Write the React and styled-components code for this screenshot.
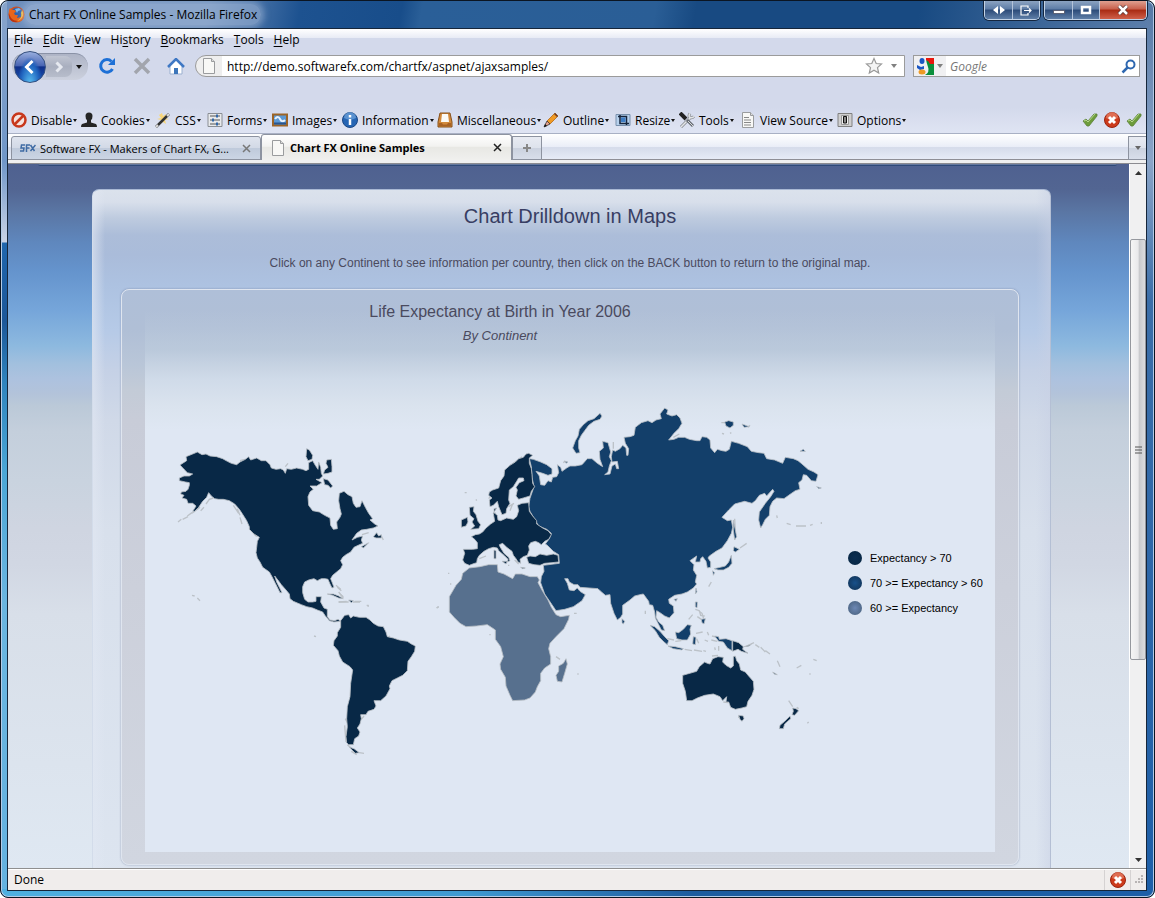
import React from 'react';
import styled, { createGlobalStyle } from 'styled-components';

const GlobalStyle = createGlobalStyle`
  * {
    box-sizing: border-box;
  }
  body {
    margin: 0;
    background: #fff;
    font-family: "Open Sans", "Noto Sans", sans-serif;
    font-size: 12px;
    color: #000;
  }
  button, input {
    font: inherit;
    color: inherit;
  }
  button {
    display: inline-flex;
    align-items: center;
    justify-content: center;
    padding: 0;
    border: none;
    background: none;
    white-space: nowrap;
  }
  svg {
    display: block;
    flex: none;
  }
`;

const Window = styled.div`
  display: flex;
  flex-direction: column;
  height: 100vh;
  padding: 0 7px 6px 6px;
  border: 1px solid #0b1522;
  border-radius: 8px;
  box-shadow: inset 0 0 0 1px #b4cbe6;
  overflow: hidden;
  background:
    linear-gradient(90deg, #4fb0e0 0, #3f9ad2 40%, #1e5c9f 60%, #1e5fa8 100%) bottom / 100% 8px no-repeat,
    linear-gradient(#88a4cb 0, #6f96c8 160px, #c9d3e6 241px, #1f66ad 242px, #1c5799 320px, #2f83bd 380px, #4aa6d6 470px, #6ab5e0 600px, #64b2e0 100%) left / 8px 100% no-repeat,
    linear-gradient(#5578a5 0, #8ba5c8 160px, #3b6ea8 300px, #1e5fa8 100%) right / 8px 100% no-repeat,
    #1c5796;
`;

const TitleBar = styled.header`
  display: flex;
  align-items: center;
  flex: none;
  height: 27px;
  padding: 0 0 0 1px;
  background: linear-gradient(100deg, #6e8fbd 0, #6c8ebb 200px, #1d5290 290px, #184d8a 390px, #2a5f98 410px, #2a5e96 640px, #184a82 680px, #184a82 900px, #5b7eab 100%);
`;

const WindowTitle = styled.h1`
  flex: 1;
  margin: 0;
  font-size: 12px;
  font-weight: 400;
  line-height: 18px;

  span {
    padding: 2px 4px;
    border-radius: 10px;
    background: rgba(170, 190, 220, 0.5);
    box-shadow: 0 0 6px 3px rgba(170, 190, 220, 0.5);
  }
`;

const WindowButtons = styled.div`
  display: flex;
  align-self: flex-start;
  height: 19px;
  margin-left: 4px;
  border: 1px solid #c3d3e6;
  border-top: none;
  border-radius: 0 0 5px 5px;
  box-shadow: 0 0 0 1px #14263f;
  overflow: hidden;
`;

const WindowButton = styled.button`
  width: ${p => (p.$close ? 47 : 27)}px;
  height: 18px;
  background: ${p => (p.$close
    ? 'linear-gradient(#dfa090, #c8604c 45%, #a82a12 50%, #d0604a)'
    : 'linear-gradient(#8ba3c2, #5d7ca6 45%, #2b4a78 50%, #5f7fa8)')};

  & + & {
    border-left: 1px solid #b4c4da;
  }
`;

const Browser = styled.div`
  display: flex;
  flex: 1;
  flex-direction: column;
  min-height: 0;
  border: 1px solid #16263a;
  background: #d3d9eb;
`;

const MenuBar = styled.nav`
  display: flex;
  align-items: center;
  gap: 10px;
  flex: none;
  height: 21px;
  padding-left: 6px;
  background: linear-gradient(#fff, #e8ebf5 9px, #d3d9eb 9px);

  u {
    text-underline-offset: 2px;
  }
`;

const NavBar = styled.div`
  display: flex;
  align-items: center;
  flex: none;
  height: 32px;
  padding: 0 6px 0 4px;
`;

const BackForward = styled.div`
  display: flex;
  align-items: center;
  width: 76px;
  height: 27px;
  border-radius: 14px;
  border-top: 1px solid #8a92a6;
  background: linear-gradient(#aeb4c6, #ccd1de);
`;

const BackButton = styled.button`
  width: 32px;
  height: 32px;
  margin-left: 2px;
  border: 1px solid #35507f;
  border-radius: 50%;
  background: radial-gradient(ellipse at 50% 110%, #5cc4f4 0, #1f62bd 45%, transparent 60%),
    linear-gradient(#98aede 0, #4a66b4 45%, #10308a 50%, #1a56b4 100%);
`;

const ForwardButton = styled.button`
  width: 26px;
  height: 21px;
  border-radius: 0 7px 7px 0;
  background: linear-gradient(#c0c5d2, #a9afbf 50%, #b7bdcb);
`;

const IconButton = styled.button`
  width: ${p => p.$w || 20}px;
  height: 20px;
`;

const UrlBar = styled.div`
  display: flex;
  align-items: center;
  flex: 1;
  height: 22px;
  margin-left: 1px;
  padding: 0 0 0 5px;
  border: 1px solid #9b9b9b;
  border-radius: 11px 0 0 11px;
  background: linear-gradient(90deg, #eee 26px, #fff 26px);
`;

const UrlInput = styled.input`
  flex: 1;
  min-width: 0;
  margin-left: 10px;
  padding: 0;
  border: none;
  outline: none;
  background: none;
`;

const SearchBar = styled(UrlBar)`
  flex: 0 0 227px;
  margin-left: 8px;
  padding: 0 3px;
  border-radius: 0;
  background: linear-gradient(90deg, #f0f0f2 32px, #fff 32px);
`;

const SearchInput = styled(UrlInput)`
  margin-left: 4px;
  font-style: italic;

  &::placeholder {
    color: #777;
    opacity: 1;
  }
`;

const DevBar = styled.div`
  display: flex;
  align-items: center;
  flex: none;
  height: 27px;
  margin-top: 25px;
  padding: 0 4px 0 3px;
  border-bottom: 1px solid #a8b0c4;
  background: linear-gradient(#d3d9eb, #dfe4f3);
`;

const DevItem = styled.button`
  flex: 0 0 ${p => p.$w}px;
  justify-content: flex-start;
  gap: 4px;
`;

const Caret = styled.i`
  width: 0;
  margin-left: ${p => (p.$wide ? 0 : -3)}px;
  border: ${p => (p.$wide ? 3 : 2)}px solid transparent;
  border-top: ${p => (p.$wide ? 4 : 3)}px solid ${p => p.$color || '#111'};
  border-bottom: 0;
`;

const DevStatus = styled.div`
  display: flex;
  gap: 6px;
  margin-left: auto;
`;

const TabStrip = styled.div`
  display: flex;
  align-items: flex-end;
  flex: none;
  height: 29px;
  padding-left: 3px;
  border-bottom: 3px solid #f0f0f0;
  background: linear-gradient(#fff, #e9edf7 50%, #d5dbea 52%, #e6ebf6 95%, #8f8f96 96%);
`;

const Tab = styled.div`
  display: flex;
  align-items: center;
  gap: 4px;
  flex: 0 1 ${p => (p.$active ? 251 : 250)}px;
  min-width: 0;
  height: ${p => (p.$active ? 26 : 24)}px;
  padding: 0 9px 0 8px;
  border: 1px solid #8d93a0;
  border-bottom-width: ${p => (p.$active ? 0 : 1)}px;
  border-radius: 3px 3px 0 0;
  background: ${p => (p.$active
    ? 'linear-gradient(#fff, #f2f2f0 45%, #e8e8e4 50%, #f0f0ee)'
    : 'linear-gradient(#dfe4ee, #d2d9e6 50%, #bfcadb 52%, #cbd5e4)')};
  font-weight: ${p => (p.$active ? 700 : 400)};
  font-size: 11px;
`;

const TabLabel = styled.a`
  flex: 1;
  overflow: hidden;
  color: inherit;
  text-decoration: none;
  text-overflow: ellipsis;
  white-space: nowrap;
`;

const TabButton = styled.button`
  width: ${p => p.$w}px;
  height: 24px;
  margin-left: ${p => (p.$end ? 'auto' : 0)};
  border: 1px solid #8d93a0;
  border-right-width: ${p => (p.$end ? 0 : 1)}px;
  background: linear-gradient(#e8ebf2, #dde2ec 50%, #cbd2df 52%, #d8deea);
`;

const Viewport = styled.div`
  display: flex;
  flex: 1;
  min-height: 0;
  border-top: 1px solid #8b8b90;
`;

const Page = styled.main`
  flex: 1;
  min-width: 0;
  padding: 0 78px 0 84px;
  overflow: hidden;
  background: linear-gradient(#4f6190 0, #526592 25px, #5a76a4 48px, #5f87bd 78px, #6594cd 108px, #76a6da 147px, #8db9df 182px, #a2c0de 200px, #adc2df 215px, #b3c3da 230px, #bbc9d8 242px, #c4cfdc 267px, #c9d3df 317px, #cfd5e1 365px, #d1d7e3 400px, #d8dfe9 450px, #dce4ee 600px, #dfe8f2 100%);
  font-family: "Liberation Sans", Arial, sans-serif;
  text-align: center;
  color: #4a4a5e;
`;

const BannerEdge = styled.div`
  height: 2px;
  margin: 0 -66px 23px -54px;
  border-bottom: 1px solid #2f4a78;
  border-radius: 0 0 6px 6px;
  background: #66799f;
`;

const Card = styled.section`
  min-height: 720px;
  padding: 14px 31px 0 28px;
  border: 1px solid #a9b8d4;
  border-left-color: #d3dcea;
  border-right-color: #b4bfd4;
  border-radius: 7px;
  background:
    linear-gradient(90deg, rgba(226, 232, 243, 0.6), transparent 12px, transparent calc(100% - 14px), rgba(200, 208, 228, 0.5)),
    linear-gradient(#dbe2ec 0, #d8dfeb 12px, #becbdf 28px, #acbdd9 45px, #aabcda 65px, #adc2e1 95px, #b6cae7 140px, #c5d1e6 180px, #d0d9e8 230px, #d8e0ec 340px, #dde5f0 100%);
`;

const PageTitle = styled.h2`
  margin: 0 0 26px;
  font-size: 20px;
  font-weight: 400;
  line-height: 24px;
  color: #383e63;
`;

const Intro = styled.p`
  margin: 0 0 17px;
  font-size: 12px;
  line-height: 18px;
`;

const Panel = styled.div`
  padding: 0 23px 12px;
  border: 1px solid #dfe5ef;
  border-radius: 8px;
  box-shadow: 0 0 2px rgba(90, 105, 140, 0.6);
  background: linear-gradient(#afbfd8 0, #b0bfd6 40px, #b9c6d8 75px, #c3cbd7 100px, #c8ccd8 130px, #ccd0db 300px, #d1d6e0 100%);
`;

const Chart = styled.figure`
  margin: 0;
  padding: 10px 0 34px;
  background: linear-gradient(transparent 0, transparent 20px, rgba(190, 205, 222, 0.6) 60px, #d0dbe9 90px, #dae3ee 115px, #dfe7f3 140px);
`;

const ChartCaption = styled.figcaption`
  padding-right: 140px;
  font-size: 16px;
  line-height: 24px;

  em {
    display: block;
    font-size: 13px;
  }
`;

const ChartBody = styled.div`
  display: flex;
  align-items: center;
`;

const WorldMap = styled.svg`
  flex: 1;
  min-width: 0;
`;

const Legend = styled.ul`
  flex: 0 0 150px;
  margin: 0;
  padding: 0 0 0 3px;
  list-style: none;
  font-size: 11px;
  line-height: 25px;
  text-align: left;
  color: #000;
`;

const LegendItem = styled.li`
  display: flex;
  align-items: center;
  gap: 8px;
  white-space: nowrap;

  &::before {
    content: '';
    width: 14px;
    height: 14px;
    border-radius: 50%;
    background: radial-gradient(${p => p.$light}, ${p => p.$color} 75%);
  }
`;

const ScrollBar = styled.div`
  display: flex;
  flex-direction: column;
  align-items: center;
  flex: 0 0 17px;
  border-left: 1px solid #fff;
  background: #f0f0f1;

  button {
    width: 16px;
    height: 17px;
  }
`;

const Track = styled.div`
  display: flex;
  flex: 1;
  flex-direction: column;
  width: 100%;
  padding-top: 58px;
`;

const Thumb = styled.div`
  display: flex;
  flex: 0 1 421px;
  align-items: center;
  justify-content: center;
  border: 1px solid #95989e;
  border-radius: 2px;
  background: linear-gradient(90deg, #f5f5f5, #e9e9eb 50%, #c9cacd 60%, #dcdcde);
`;

const StatusBar = styled.footer`
  display: flex;
  align-items: center;
  flex: none;
  height: 22px;
  padding-left: 6px;
  border-top: 1px solid #8f8f8f;
  background: #f0edec;
  box-shadow: inset 0 1px #fff;
`;

const StatusCell = styled.div`
  display: flex;
  align-items: center;
  justify-content: center;
  width: ${p => p.$w}px;
  height: 20px;
  border-left: 1px solid #d5d2d2;

  &:first-of-type {
    margin-left: auto;
  }
`;

const menus = [['', 'F', 'ile'], ['', 'E', 'dit'], ['', 'V', 'iew'], ['Hi', 's', 'tory'], ['', 'B', 'ookmarks'], ['', 'T', 'ools'], ['', 'H', 'elp']];

function FirefoxLogo() {
  return (
    <svg width="17" height="17" viewBox="0 0 17 17">
      <circle cx="8.5" cy="8.5" r="8" fill="#d8501a" />
      <circle cx="9" cy="7" r="5.500" fill="#2f62ae" />
      <path d="M7 3l4-1 2 2-3 1-1 2z" fill="#7fb8e8" />
      <path d="M1 4l1-2 2 2 3 0 1 2-2 1 1 2 3 0-1 3 4-1 1-4 1-3 1 3c1 6-3 9-7 9C3 15 0 11 1 4z" fill="#e8651c" />
      <path d="M14 4c3 5 0 10-5 11 4-2 5-5 4-8z" fill="#f8c23c" />
      <path d="M1 7c1 5 4 8 9 8-5 3-10-1-9-8z" fill="#b83312" />
    </svg>
  );
}

function PageIcon({ lines }) {
  return (
    <svg width="16" height="16" viewBox="0 0 16 16">
      <path d="M2.500.500h8l3 3v12h-11z" fill="#f8f8f6" stroke="#9a9c9e" />
      <path d="M10.500.500v3h3" fill="#ddd" stroke="#9a9c9e" />
      {lines && <path d="M4 5.500h5M4 8h7M4 10.500h7M4 13h7" stroke="#888" />}
    </svg>
  );
}

function Check() {
  return (
    <svg width="16" height="16" viewBox="0 0 16 16">
      <path d="M1 9l3-2 2 2 6-7 3 0 0 2-8 10-2 0z" fill="#6d9c3c" stroke="#5c8038" strokeWidth=".8" />
      <path d="M2 9l2-1 2 2 7-8" fill="none" stroke="#b6d88a" />
    </svg>
  );
}

function ErrorIcon() {
  return (
    <svg width="16" height="16" viewBox="0 0 16 16">
      <circle cx="8" cy="8" r="7.500" fill="#cc3b1c" stroke="#9a2410" />
      <path d="M2 6a6 6 0 0 1 12 0q-6 3-12 0" fill="#e8836a" opacity=".7" />
      <path d="M5 5l6 6M11 5l-6 6" stroke="#fff" strokeWidth="3" />
    </svg>
  );
}

function Close({ color }) {
  return (
    <svg width="9" height="9" viewBox="0 0 9 9">
      <path d="M1 1l7 7M8 1L1 8" stroke={color} strokeWidth="1.500" />
    </svg>
  );
}

const devIcons = {
  Disable: (
    <>
      <circle cx="8" cy="8" r="6.500" fill="#f4e4e0" stroke="#c8381c" strokeWidth="2.500" />
      <path d="M12 4l-8 8" stroke="#c8381c" strokeWidth="2.500" />
    </>
  ),
  Cookies: <path d="M4.500 4q0-3.500 3.500-3.500t3.500 3.500q0 3-1.500 4v2.500l5 1.500q1 1 1 3H0q0-2 1-3l5-1.500V8Q4.500 7 4.500 4z" fill="#252525" />,
  CSS: (
    <>
      <path d="M7 1l1 3 3-2-1 4 4 1-4 1 1 4-3-2-3 2 1-4-4-1 4-1-2-3z" fill="#f9d678" />
      <path d="M1 15L14 2" stroke="#333" strokeWidth="2.500" />
      <path d="M12 4l2-2M1 15l2-2" stroke="#ddd" strokeWidth="2" />
    </>
  ),
  Forms: (
    <>
      <path d="M1 1.500h14v13H1z" fill="#e8eaec" stroke="#8a8e94" />
      <path d="M3 4h10M3 8h10M3 12h10" stroke="#555" />
      <path d="M10 2.500v3M6 6.500v3M10 10.500v3" stroke="#3267a8" strokeWidth="2" />
    </>
  ),
  Images: (
    <>
      <path d="M1 2.500h14v11H1z" fill="#5b98d4" stroke="#9c6426" strokeWidth="2" />
      <path d="M3 7q3-4 5 0t5 1" stroke="#e8f2fc" strokeWidth="2" fill="none" />
      <path d="M2 11.500h12" stroke="#2a558c" strokeWidth="2" />
    </>
  ),
  Information: (
    <>
      <circle cx="8" cy="8" r="7.500" fill="#2565b4" stroke="#1c4884" />
      <path d="M2 6a6 6 0 0 1 12 0q-6 3-12 0" fill="#7fb0e4" opacity=".6" />
      <path d="M8 3v2.500M8 7v6" stroke="#fff" strokeWidth="2.500" />
    </>
  ),
  Miscellaneous: (
    <>
      <path d="M3 1h10l2 9v5H1v-5z" fill="#d28a3c" stroke="#87501a" />
      <path d="M5 2h6l1 8H4z" fill="#fbfaf6" />
      <path d="M2 11h3l1 1.500h4l1-1.500h3v3H2z" fill="#a86224" />
    </>
  ),
  Outline: (
    <>
      <path d="M4 9l8-8 3 3-8 8z" fill="#f09a24" stroke="#b46a14" strokeWidth=".8" />
      <path d="M12 1l3 3-1 1-3-3z" fill="#6b3a2a" />
      <path d="M4 9l3 3-6 3z" fill="#e8a08c" stroke="#333" strokeWidth=".8" />
      <path d="M1 15l1-3 2 2z" fill="#111" />
    </>
  ),
  Resize: (
    <>
      <path d="M1 2.500h14v11H1z" fill="#b6d0ec" stroke="#7890ac" />
      <path d="M5 3v8.500h9M3 4.500h8.500V13" fill="none" stroke="#15243c" strokeWidth="1.500" />
      <path d="M6 5.500h4.500v4.500H6z" fill="#3d7cc4" />
    </>
  ),
  Tools: (
    <>
      <path d="M2 15L12 5M11 1.500q-2 3 0 4t4-1" stroke="#85898f" strokeWidth="3" fill="none" />
      <path d="M2 15L12 5M11 1.500q-2 3 0 4t4-1" stroke="#e4e6e8" strokeWidth="1.500" fill="none" />
      <path d="M1 1l6 6" stroke="#222" strokeWidth="4" />
      <path d="M8 8l6 6" stroke="#666b72" strokeWidth="3" />
      <path d="M9 9l5 5" stroke="#d8dadc" />
    </>
  ),
  Options: (
    <>
      <path d="M1 1.500h14v13H1z" fill="#cfcfcf" stroke="#808080" />
      <path d="M4.500 3.500h7v9h-7z" fill="#eee" stroke="#999" />
      <path d="M6.500 11V4.500h3V11z" fill="#888" stroke="#111" />
    </>
  ),
};

const devItems = [
  ['Disable', 70], ['Cookies', 74], ['CSS', 52], ['Forms', 65], ['Images', 70], ['Information', 95],
  ['Miscellaneous', 106], ['Outline', 72], ['Resize', 64], ['Tools', 61], ['View Source', 97], ['Options', 70],
];

const northAmerica = 'M60 105L80 92 78 80 98 72 112 66 126 74 138 72 150 78 170 80 188 86 202 94 214 100 230 104 240 96 256 88 266 80 272 90 290 84 304 92 318 92 330 104 334 114 348 118 362 116 370 120 376 130 380 116 394 118 410 114 428 118 438 122 446 118 446 98 458 92 466 106 474 118 476 96 482 112 484 130 488 138 478 148 468 148 486 158 470 168 450 168 460 178 450 186 444 200 446 226 458 242 478 246 494 256 510 264 512 286 520 298 532 296 530 276 540 262 544 252 540 236 536 212 538 190 552 184 564 194 576 200 580 220 588 232 600 230 606 212 616 232 626 250 638 266 630 270 644 282 654 288 640 294 620 298 604 300 590 310 576 330 592 322 608 318 604 330 608 340 590 348 582 352 572 366 558 374 548 382 542 392 548 404 542 416 530 426 518 436 512 446 516 456 522 472 516 474 510 462 504 448 496 446 484 446 472 452 462 446 446 450 434 456 428 470 428 488 434 508 444 516 458 516 468 514 468 500 484 500 482 516 492 534 502 538 502 560 510 570 524 572 534 568 542 574 522 576 508 572 496 558 488 546 472 540 458 534 440 530 424 524 400 514 390 506 388 492 378 480 364 464 352 448 344 438 350 456 358 472 366 488 360 488 346 460 336 440 328 426 308 412 300 396 292 384 288 368 290 352 292 334 298 322 282 312 268 298 268 290 260 272 246 250 238 238 224 222 208 212 190 208 176 208 164 206 154 198 146 188 140 202 128 214 116 232 104 244 98 244 108 228 98 220 84 220 80 208 66 204 72 196 62 192 64 186 78 184 84 178 88 166 88 158 76 156 58 152 58 144 72 138 88 138 98 132 82 128 72 118ZM440 56L448 60 458 76 456 88 444 92 438 80ZM500 90L514 88 516 110 516 126 504 130 490 132 494 120 504 112 498 100ZM490 146L504 150 518 168 512 174 504 166 494 164ZM640 320L650 308 656 318 664 314 664 324 648 324ZM604 350L626 338 610 354ZM502 492L520 492 536 498 550 506 536 504 518 496ZM566 510L580 512 574 518Z';

const southAmerica = 'M92 122L104 106 116 104 122 114 130 108 148 112 168 112 180 120 190 130 204 138 220 140 228 156 232 170 250 174 268 180 292 184 304 192 316 198 314 214 304 230 294 244 292 272 278 286 262 294 246 302 238 318 240 326 228 348 212 362 192 362 198 378 192 388 174 394 168 404 152 404 154 416 150 432 142 444 150 456 146 468 134 476 130 494 116 494 110 488 108 470 112 440 110 416 112 380 120 350 122 310 128 270 120 260 98 246 88 228 84 212 70 196 72 182 82 168 82 158 92 142ZM118 502L132 506 148 518 136 520Z';

const europe = 'M296 40L308 46 298 54 298 70 304 86 306 104 308 130 314 140 304 154 300 168 280 174 266 178 258 168 262 150 258 142 268 128 282 122 280 114 266 114 260 124 250 140 238 150 236 180 240 190 230 206 228 220 216 224 206 200 202 184 190 196 180 200 178 180 186 174 176 166 178 156 188 150 206 144 212 122 222 108 224 90 240 76 256 66 266 56 280 52 288 42ZM296 188L276 190 262 196 266 212 260 230 250 238 230 234 212 242 204 240 202 226 192 218 192 206 200 204 190 220 194 244 182 252 168 264 158 276 148 282 136 284 124 290 134 298 142 308 142 326 128 328 100 328 104 340 98 360 104 370 118 376 128 372 140 368 142 356 148 346 162 334 176 326 190 322 202 324 206 332 222 346 234 358 232 366 240 362 236 352 222 340 210 320 208 314 218 310 230 322 246 334 250 346 258 356 264 366 272 370 270 358 280 350 292 346 298 330 296 318 302 308 316 304 326 308 334 314 344 304 356 298 364 284 354 272 338 264 320 252 320 242 308 228 298 214ZM290 352L300 348 316 350 330 342 350 346 370 342 384 346 386 366 366 368 344 370 330 376 312 374 296 370ZM118 202L132 200 130 214 138 224 144 244 152 254 146 266 122 268 134 258 126 246 132 236 120 226ZM94 240L112 232 114 246 108 258 94 262ZM192 330L198 332 198 356 192 356ZM216 364L232 364 228 372ZM272 382L286 384 278 386Z';

const africa = 'M118 384L150 380 176 374 202 374 204 396 222 402 248 416 256 402 276 402 300 410 322 410 328 420 324 428 338 454 354 480 364 502 378 524 392 530 418 526 416 538 402 566 378 590 360 610 356 626 362 650 362 672 344 684 332 700 332 722 322 740 316 756 300 774 284 780 248 782 240 766 228 738 226 712 212 688 210 672 220 650 212 620 196 598 196 570 184 562 172 554 140 558 108 560 90 550 72 532 58 516 58 470 78 436 94 418 98 400ZM408 656L412 672 404 700 396 726 382 724 378 706 386 694 386 678 400 670Z';

const asia = 'M28 206L40 208 62 216 80 224 96 236 96 252 84 256 68 250 48 244 58 258 62 284 74 286 84 272 94 276 98 262 110 260 116 248 112 224 122 232 126 244 140 234 150 228 166 228 186 224 202 206 216 206 232 220 248 230 240 208 238 184 250 174 248 154 264 158 268 172 272 186 268 200 274 212 268 228 264 246 254 254 270 252 276 228 286 222 290 236 296 236 292 214 276 216 274 200 278 180 286 184 300 176 308 166 318 174 320 196 324 196 326 176 316 160 312 142 330 140 342 136 346 112 364 98 384 92 396 98 408 90 424 86 420 72 434 54 444 60 440 72 456 78 470 74 480 84 486 100 476 116 462 130 446 150 462 148 476 142 494 142 508 148 530 152 540 152 546 140 560 142 570 150 572 174 584 188 592 178 606 182 618 184 628 178 634 154 656 160 682 170 694 184 716 188 732 190 740 206 764 210 788 220 796 202 820 206 834 212 846 222 864 238 882 246 894 254 888 274 874 272 860 256 850 254 846 270 836 278 840 298 826 302 806 316 792 326 770 324 758 334 750 350 748 376 736 388 728 404 722 414 716 390 718 366 736 340 752 320 762 304 758 298 740 318 734 310 718 316 706 332 696 340 674 334 644 342 626 360 606 382 622 392 634 390 638 412 634 430 622 452 606 474 588 484 568 498 564 504 572 516 572 532 562 534 558 514 548 500 542 506 540 516 526 516 530 498 510 512 522 524 520 540 530 556 526 576 530 582 520 594 502 606 486 612 464 616 446 628 448 640 460 648 462 668 448 684 434 678 420 668 410 662 408 682 416 696 428 706 434 722 424 720 414 700 406 684 404 666 398 646 388 644 386 634 370 612 360 614 344 618 330 630 308 646 308 672 302 682 292 690 282 670 272 640 270 614 256 616 240 602 234 596 180 592 174 584 162 584 148 576 144 566 134 566 142 580 148 600 162 602 172 594 180 604 196 614 186 632 160 650 134 658 108 662 96 644 74 612 62 578 64 560 72 544 70 526 118 520 116 494 100 484 82 466 76 462 88 446 94 430 80 418 56 408 44 388 30 364 26 350 30 325 42 290 36 262 34 230ZM240 70L246 78 240 88 222 94 206 106 194 122 184 136 176 152 176 174 180 188 168 190 158 174 166 152 174 138 178 118 190 104 204 92 222 86ZM640 390L646 420 650 440 644 450 640 420ZM642 470L658 478 646 486 640 482ZM634 496L636 520 626 532 610 540 594 540 582 536 600 532 616 528 626 516ZM578 542L584 548 580 556ZM614 96L626 92 640 96 640 106 630 114 618 108ZM666 102L688 110 672 112ZM840 184L850 178 856 184ZM134 214L144 216 138 220ZM528 594L531 606 526 612ZM890 290L904 294 896 296Z';

const indonesia = 'M316 186L322 186 321 204 316 200ZM96 236L104 244 100 252 96 248ZM252 178L262 176 258 184ZM180 256L194 260 210 274 224 290 236 302 232 314 222 306 208 292 196 272ZM234 318L256 320 280 326 276 330 250 326ZM256 276L266 278 280 268 292 254 304 256 300 268 302 282 292 300 276 300 260 296ZM310 290L318 292 316 314 308 312ZM334 238L346 236 342 252 336 248ZM374 288L386 290 388 298 408 296 426 302 426 332 412 324 400 306 386 304Z';

const oceania = 'M428 302L446 308 460 320 458 328 474 340 454 334 444 328 428 334ZM278 406L292 402 320 394 328 380 344 366 352 370 360 372 368 356 384 350 400 352 398 366 408 376 422 384 430 378 430 350 436 348 440 362 448 372 452 390 466 396 476 408 490 424 492 448 486 466 474 484 470 500 456 504 436 508 422 502 416 486 408 486 410 470 398 482 390 470 370 462 344 466 322 474 306 482 290 482 286 454 278 430ZM446 526L460 528 462 536 456 544 450 538ZM608 504L618 506 626 512 614 526 606 524 610 514ZM600 528L602 536 584 552 580 566 568 566 570 556 584 544ZM548 396L562 404 554 403ZM462 320L482 314 486 310 478 318Z';

// small island chains, one list for each region of the map
const islands = [
  [160, 430, 'M54 276l10-8M68 268l16-8M82 258l14-10M96 250l24-18M122 242l10-10M138 222l10-14 12-4M220 226l16 24M232 236l8 20M240 262l6 20M270 298l20 22M284 300l12 18M96 496l8 2M112 504l8 8M528 466l14 12M536 486l14 18M536 516l24-2M584 514l20 0M620 526l6 0M664 318l6 12M606 314l20-6M376 110l8-10M240 92l14-4'],
  [310, 580, 'M82 22l12 10M90 42l10 8M86 66l30 0M128 66l22 0M172 78l5 0M380 84l6-4M12 168l6 2M232 174l8-6M106 416l6 12M104 436l4 50M112 494l16 14M124 514l16 10M148 518l14 2M154 418l8-10'],
  [430, 440, 'M104 158l6 0M138 178l2 4M20 504l6-4M54 400l4 0M62 430l0 4M378 650l12 8M442 702l4 0M432 520l8 0M178 584l4 0M222 98l20-22 34-26M176 176l14-18M236 200l16-10M240 212l8-20M196 218l2 20M258 350l12 8M254 360l12 12M148 356l20-8M234 376l4 0'],
  [520, 390, 'M770 376l2 8M800 400l12 4M828 408l30 0M870 406l8-3M904 396l0 6M660 474l20-14M566 590l8-14M604 98l16 0M606 130l6 2M630 130l4-2M684 112l6-6M460 142l18-10M280 156l0 20M48 246l10 30M130 218l6-6M644 386l2 40'],
  [590, 540, 'M316 208l12 4 4 14 12 2M326 212l10 8 6 20M322 230l12 8M296 238l12-14M166 222l0-10M232 296l20 4M256 304l18-2M284 328l22 4M312 330l24 4M340 332l8 2M318 280l20-4M352 276l4 10M366 288l16 4M364 300l18 4M320 296l6 14M344 300l10 4M374 322l2 8M386 318l0 14M496 314l12 8M512 322l14 14M526 332l14 10M562 362l8 18M620 384l14-8M670 358l10 4M658 402l4 0M596 482l12 18M652 550l4-4M470 318l22-10M366 348l18-2M400 486l14 2M446 528l0 6M626 506l-6-4'],
];

const lands = [
  [520, 390, asia, '#133f6a'],
  [430, 440, africa, '#57708e'],
  [430, 440, europe, '#082846'],
  [160, 430, northAmerica, '#082846'],
  [310, 580, southAmerica, '#082846'],
  [590, 540, indonesia, '#133f6a'],
  [590, 540, oceania, '#082846'],
];

const legend = [
  ['Expectancy > 70', '#082846', '#0c2f52'],
  ['70 >= Expectancy > 60', '#12385f', '#17508a'],
  ['60 >= Expectancy', '#4f6887', '#6d88b4'],
];

function Continents() {
  return (
    <WorldMap viewBox="145 348 700 470" role="img" aria-label="World map by continent">
      {islands.map(([x, y, d]) => (
        <path key={d} d={d} transform={`translate(${x} ${y}) scale(.33333)`} fill="none" stroke="#bcc2c8" strokeWidth="4" />
      ))}
      {lands.map(([x, y, d, fill]) => (
        <path key={d} d={d} transform={`translate(${x} ${y}) scale(.33333)`} fill={fill} stroke="#b9bfc5" strokeWidth="2.500" />
      ))}
    </WorldMap>
  );
}

function App() {
  return (
    <>
      <GlobalStyle />
      <Window>
        <TitleBar>
          <FirefoxLogo />
          <WindowTitle><span>Chart FX Online Samples - Mozilla Firefox</span></WindowTitle>
          <WindowButtons>
            <WindowButton aria-label="Move window">
              <svg width="12" height="8" viewBox="0 0 12 8"><path d="M5 0v8L0 4zM7 0v8l5-4z" fill="#fff" /></svg>
            </WindowButton>
            <WindowButton aria-label="Send to screen">
              <svg width="12" height="11" viewBox="0 0 12 11"><path d="M8 3V1H1v9h7V8M4 5.500h7M9 3.500l2 2-2 2" fill="none" stroke="#fff" strokeWidth="1.200" /></svg>
            </WindowButton>
          </WindowButtons>
          <WindowButtons>
            <WindowButton aria-label="Minimize">
              <svg width="12" height="8" viewBox="0 0 12 8"><path d="M.5 4.500h11v3H.5z" fill="#fff" stroke="#445" strokeWidth=".7" /></svg>
            </WindowButton>
            <WindowButton aria-label="Maximize">
              <svg width="12" height="10" viewBox="0 0 12 10"><path d="M2 2h8v6H2z" fill="none" stroke="#fff" strokeWidth="2.500" /></svg>
            </WindowButton>
            <WindowButton $close aria-label="Close">
              <svg width="12" height="10" viewBox="0 0 12 10"><path d="M2 1l8 8M10 1L2 9" stroke="#533" strokeWidth="4" /><path d="M2 1l8 8M10 1L2 9" stroke="#fff" strokeWidth="2.500" /></svg>
            </WindowButton>
          </WindowButtons>
        </TitleBar>
        <Browser>
          <MenuBar>
            {menus.map(([before, key, after]) => (
              <button key={key + after}><span>{before}<u>{key}</u>{after}</span></button>
            ))}
          </MenuBar>
          <NavBar>
            <BackForward>
              <BackButton aria-label="Back">
                <svg width="16" height="16" viewBox="0 0 16 16"><path d="M10.500 2L4.500 8l6 6" fill="none" stroke="#fff" strokeWidth="3" /></svg>
              </BackButton>
              <ForwardButton aria-label="Forward">
                <svg width="12" height="12" viewBox="0 0 12 12"><path d="M3.500 1.500L8 6l-4.500 4.500" fill="none" stroke="#e6e9f0" strokeWidth="3" /></svg>
              </ForwardButton>
              <IconButton $w={14} aria-label="Recent pages"><Caret $wide /></IconButton>
            </BackForward>
            <IconButton $w={38} aria-label="Reload">
              <svg width="18" height="18" viewBox="0 0 18 18">
                <path d="M13.500 4.500A6.300 6.300 0 1 0 14.500 12" fill="none" stroke="#1d70d6" strokeWidth="3" />
                <path d="M17 1v7h-7z" fill="#1d70d6" />
              </svg>
            </IconButton>
            <IconButton $w={31} aria-label="Stop">
              <svg width="18" height="18" viewBox="0 0 18 18"><path d="M2 2l14 14M16 2L2 16" stroke="#a2a5ad" strokeWidth="3.500" /></svg>
            </IconButton>
            <IconButton $w={37} aria-label="Home">
              <svg width="18" height="17" viewBox="0 0 18 17">
                <path d="M3 8l6-6 6 6v8H3z" fill="#fff" stroke="#9ab0d0" />
                <path d="M1 9l8-8 8 8" fill="none" stroke="#3f78c4" strokeWidth="2.500" />
                <path d="M7 10h4v6H7z" fill="#3d76ba" />
              </svg>
            </IconButton>
            <UrlBar>
              <PageIcon />
              <UrlInput aria-label="Address" defaultValue="http://demo.softwarefx.com/chartfx/aspnet/ajaxsamples/" />
              <IconButton aria-label="Bookmark">
                <svg width="18" height="18" viewBox="0 0 18 18"><path d="M9 1.500l2.200 5 5.300.5-4 3.600 1.200 5.400L9 13.200 4.300 16l1.200-5.400-4-3.600 5.300-.5z" fill="#f4f4f4" stroke="#999" strokeWidth="1.200" /></svg>
              </IconButton>
              <IconButton aria-label="History"><Caret $wide $color="#808080" /></IconButton>
            </UrlBar>
            <SearchBar>
              <svg width="17" height="17" viewBox="0 0 17 17">
                <path d="M9 0h8v17H8q5-3 3-8t-2-9z" fill="#0a8f3c" />
                <path d="M9 0h8v6h-4q-1-3-4-4z" fill="#e8160c" />
                <ellipse cx="5" cy="3" rx="2.500" ry="3" fill="#1a56c4" />
                <path d="M0 7l4 2 3-1v3l-4 1-3-2z" fill="#1a56c4" />
                <ellipse cx="5" cy="14" rx="3.500" ry="2.500" fill="#ee9a24" />
              </svg>
              <IconButton $w={12} aria-label="Search engine"><Caret $wide $color="#808080" /></IconButton>
              <SearchInput aria-label="Search" placeholder="Google" />
              <svg width="15" height="15" viewBox="0 0 15 15"><circle cx="9.500" cy="5.500" r="4" fill="none" stroke="#2f68b0" strokeWidth="2" /><path d="M6.500 8.500L1.500 13.500" stroke="#2f68b0" strokeWidth="2.500" /></svg>
            </SearchBar>
          </NavBar>
          <DevBar>
            {devItems.map(([label, w]) => (
              <DevItem key={label} $w={w}>
                {label === 'View Source' ? <PageIcon lines /> : <svg width="16" height="16" viewBox="0 0 16 16">{devIcons[label]}</svg>}
                {label}
                <Caret />
              </DevItem>
            ))}
            <DevStatus>
              <Check />
              <ErrorIcon />
              <Check />
            </DevStatus>
          </DevBar>
          <TabStrip>
            <Tab>
              <svg width="16" height="8" viewBox="0 0 16 8"><path d="M5 1H1.500L1 4h3l-.5 3H0M6.500 8V1H10M6.500 4H9.500M10.500 1l4 6M15.500 1l-5 6" fill="none" stroke="#3f6ba4" strokeWidth="1.500" /></svg>
              <TabLabel href="#sfx">Software FX - Makers of Chart FX, G...</TabLabel>
              <button aria-label="Close Software FX tab"><Close color="#777" /></button>
            </Tab>
            <Tab $active>
              <PageIcon />
              <TabLabel href="#samples">Chart FX Online Samples</TabLabel>
              <button aria-label="Close Chart FX tab"><Close color="#222" /></button>
            </Tab>
            <TabButton $w={30} aria-label="New tab">
              <svg width="8" height="8" viewBox="0 0 8 8"><path d="M4 0v8M0 4h8" stroke="#888" strokeWidth="2" /></svg>
            </TabButton>
            <TabButton $w={18} $end aria-label="All tabs"><Caret $wide $color="#666" /></TabButton>
          </TabStrip>
          <Viewport>
            <Page>
              <BannerEdge />
              <Card>
                <PageTitle>Chart Drilldown in Maps</PageTitle>
                <Intro>Click on any Continent to see information per country, then click on the BACK button to return to the original map.</Intro>
                <Panel>
                  <Chart>
                    <ChartCaption>
                      Life Expectancy at Birth in Year 2006
                      <em>By Continent</em>
                    </ChartCaption>
                    <ChartBody>
                      <Continents />
                      <Legend>
                        {legend.map(([label, color, light]) => (
                          <LegendItem key={label} $color={color} $light={light}>{label}</LegendItem>
                        ))}
                      </Legend>
                    </ChartBody>
                  </Chart>
                </Panel>
              </Card>
            </Page>
            <ScrollBar>
              <button aria-label="Scroll up"><svg width="7" height="4" viewBox="0 0 7 4"><path d="M0 4l3.500-4L7 4z" fill="#333" /></svg></button>
              <Track>
                <Thumb><svg width="7" height="8" viewBox="0 0 7 8"><path d="M0 1h7M0 4h7M0 7h7" stroke="#555" /></svg></Thumb>
              </Track>
              <button aria-label="Scroll down"><svg width="7" height="4" viewBox="0 0 7 4"><path d="M0 0l3.500 4L7 0z" fill="#333" /></svg></button>
            </ScrollBar>
          </Viewport>
          <StatusBar>
            Done
            <StatusCell $w={26}><ErrorIcon /></StatusCell>
            <StatusCell $w={16}>
              <svg width="9" height="9" viewBox="0 0 9 9"><path d="M7 1h2M4 4h2M7 4h2M1 7h2M4 7h2M7 7h2" stroke="#b8b4b4" strokeWidth="2" /></svg>
            </StatusCell>
          </StatusBar>
        </Browser>
      </Window>
    </>
  );
}

export default App;
